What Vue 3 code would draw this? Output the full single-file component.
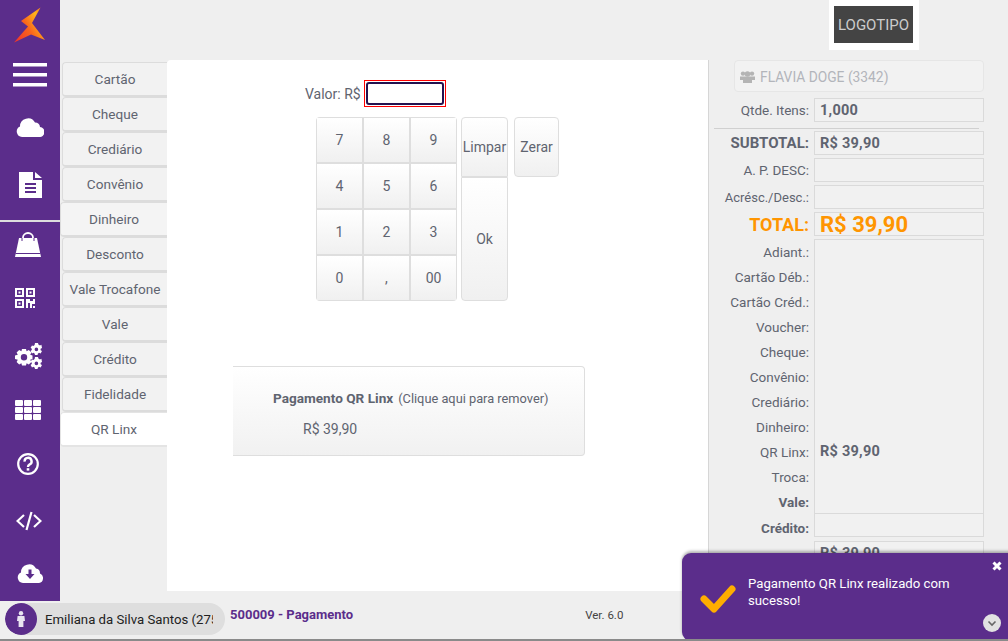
<script setup>
const tabs = ['Cartão', 'Cheque', 'Crediário', 'Convênio', 'Dinheiro', 'Desconto', 'Vale Trocafone', 'Vale', 'Crédito', 'Fidelidade', 'QR Linx'];
const keys = ['7', '8', '9', '4', '5', '6', '1', '2', '3', '0', ',', '00'];
const payments = [
  { label: 'Adiant.:' },
  { label: 'Cartão Déb.:' },
  { label: 'Cartão Créd.:' },
  { label: 'Voucher:' },
  { label: 'Cheque:' },
  { label: 'Convênio:' },
  { label: 'Crediário:' },
  { label: 'Dinheiro:' },
  { label: 'QR Linx:', value: 'R$ 39,90' },
  { label: 'Troca:' },
  { label: 'Vale:', bold: true }
];
</script>

<template>
  <div class="app">
    <aside class="side">
      <nav class="rail">
        <a class="ico">
          <svg width="32" height="36" viewBox="0 0 32 36">
            <defs>
              <linearGradient id="lg" x1="0" y1="1" x2="1" y2="0.3">
                <stop offset="0" stop-color="#f0302c" />
                <stop offset="0.5" stop-color="#f9641c" />
                <stop offset="0.85" stop-color="#ffb41a" />
                <stop offset="1" stop-color="#ff8a1a" />
              </linearGradient>
            </defs>
            <path d="M26.5 0.5 L7 14 L14 19.5 L0 35.5 L17 27.5 L31 33 L18 16 Z" fill="url(#lg)" />
          </svg>
        </a>
        <a class="ico">
          <svg width="34" height="24" viewBox="0 0 34 24" fill="#fff">
            <rect y="0" width="34" height="3.5" />
            <rect y="10" width="34" height="3.5" />
            <rect y="20" width="34" height="3.5" />
          </svg>
        </a>
        <a class="ico">
          <svg width="28" height="20" viewBox="0 0 28 20" fill="#fff">
            <path d="M6 20 A5.5 5.5 0 0 1 4 9.5 A8 8 0 0 1 19 5.5 A5 5 0 0 1 24 10 A5 5 0 0 1 23 20 Z" />
          </svg>
        </a>
        <a class="ico">
          <svg width="23" height="26" viewBox="0 0 23 26">
            <path d="M0 0 H14 V8 H23 V26 H0 Z M16 0 L23 6 H16 Z" fill="#fff" />
            <path d="M6 12 H17 M6 16 H17 M6 20 H17" stroke="#5b2d8b" stroke-width="2" />
          </svg>
        </a>
        <div class="rule"></div>
        <a class="ico nudge">
          <svg width="26" height="26" viewBox="0 0 26 26" fill="none">
            <path d="M4 6 H22 L26 25 H0 Z" fill="#fff" />
            <path d="M8 9 V5.5 A5 4.5 0 0 1 18 5.5 V9" stroke="#fff" stroke-width="1.8" />
            <path d="M7 6 V9 M19 6 V9" stroke="#5b2d8b" stroke-width="1" />
            <path d="M0.5 21.5 H25.5" stroke="#5b2d8b" stroke-width="1" />
          </svg>
        </a>
        <a class="ico ico-qr">
          <svg width="20" height="20" viewBox="0 0 20 20" fill="#fff">
            <path fill-rule="evenodd" d="M0 0 H9 V9 H0 Z M2 2 V7 H7 V2 Z M3.5 3.5 H5.5 V5.5 H3.5 Z" />
            <path fill-rule="evenodd" d="M11 0 H20 V9 H11 Z M13 2 V7 H18 V2 Z M14.5 3.5 H16.5 V5.5 H14.5 Z" />
            <path fill-rule="evenodd" d="M0 11 H9 V20 H0 Z M2 13 V18 H7 V13 Z M3.5 14.5 H5.5 V16.5 H3.5 Z" />
            <path d="M11 11 H15 V13 H18 V11 H20 V16 H17 V20 H15 V15 H13 V20 H11 Z M18 18 H20 V20 H18 Z" />
          </svg>
        </a>
        <a class="ico nudge">
          <svg width="28" height="26" viewBox="0 0 28 26" fill="#fff">
            <path fill-rule="evenodd" d="M8 6 H12 L12.6 8.2 L14.8 7 L17.4 9.6 L16.2 11.8 L18.5 12.5 V16 L16.2 16.7 L17.4 18.9 L14.8 21.5 L12.6 20.3 L12 22.5 H8 L7.4 20.3 L5.2 21.5 L2.6 18.9 L3.8 16.7 L1 16 V12.5 L3.8 11.8 L2.6 9.6 L5.2 7 L7.4 8.2 Z M10 11 A3.2 3.2 0 1 0 10 17.4 A3.2 3.2 0 1 0 10 11 Z" />
            <path fill-rule="evenodd" d="M21 0 H24 L24.4 1.6 L26 2.4 L27.4 1.8 L28 5 L26.6 5.8 V7.2 L28 8 L26.6 10.4 L25 9.8 L23.8 10.8 L23.6 12 H21 L20.6 10.6 L19.4 9.8 L18 10.4 L16.6 8 L17.8 7 V5.8 L16.6 4.8 L18 2.4 L19.4 3 L20.6 2 Z M22.4 4.6 A1.8 1.8 0 1 0 22.4 8.2 A1.8 1.8 0 1 0 22.4 4.6 Z" />
            <path fill-rule="evenodd" d="M21 14 H24 L24.4 15.6 L26 16.4 L27.4 15.8 L28 19 L26.6 19.8 V21.2 L28 22 L26.6 24.4 L25 23.8 L23.8 24.8 L23.6 26 H21 L20.6 24.6 L19.4 23.8 L18 24.4 L16.6 22 L17.8 21 V19.8 L16.6 18.8 L18 16.4 L19.4 17 L20.6 16 Z M22.4 18.6 A1.8 1.8 0 1 0 22.4 22.2 A1.8 1.8 0 1 0 22.4 18.6 Z" />
          </svg>
        </a>
        <a class="ico nudge">
          <svg width="26" height="20" viewBox="0 0 26 20" fill="#fff">
            <rect x="0" y="0" width="8" height="6" rx="1" />
            <rect x="9" y="0" width="8" height="6" rx="1" />
            <rect x="18" y="0" width="8" height="6" rx="1" />
            <rect x="0" y="7" width="8" height="6" rx="1" />
            <rect x="9" y="7" width="8" height="6" rx="1" />
            <rect x="18" y="7" width="8" height="6" rx="1" />
            <rect x="0" y="14" width="8" height="6" rx="1" />
            <rect x="9" y="14" width="8" height="6" rx="1" />
            <rect x="18" y="14" width="8" height="6" rx="1" />
          </svg>
        </a>
        <a class="ico nudge">
          <svg width="22" height="22" viewBox="0 0 22 22" fill="none" stroke="#fff">
            <circle cx="11" cy="11" r="9.8" stroke-width="2.2" />
            <path d="M7.6 8.6 A3.5 3.5 0 1 1 12.4 11.6 C11.3 12.2 11 12.7 11 14" stroke-width="2.4" />
            <path d="M11 15.2 V17.6" stroke-width="2.6" />
          </svg>
        </a>
        <a class="ico ico-code">
          <svg width="26" height="20" viewBox="0 0 26 20" fill="none" stroke="#fff" stroke-width="2.2">
            <path d="M8 4 L1.5 10 L8 16" />
            <path d="M18 4 L24.5 10 L18 16" />
            <path d="M15.5 1 L10.5 19" />
          </svg>
        </a>
        <a class="ico">
          <svg width="26" height="19" viewBox="0 0 26 19">
            <path d="M6 19 A5.5 5.5 0 0 1 4 8.5 A8 8 0 0 1 19 4.5 A5 5 0 0 1 23 9.5 A5 5 0 0 1 22 19 Z" fill="#fff" />
            <path d="M11.5 5.5 H14.5 V10 H17.5 L13 15 L8.5 10 H11.5 Z" fill="#5b2d8b" />
          </svg>
        </a>
      </nav>
    </aside>

    <div class="main">
      <header class="top">
        <div class="logo-wrap">
          <div class="logo">LOGOTIPO</div>
        </div>
      </header>

      <div class="middle">
        <ul class="tabs">
          <li
            v-for="tab in tabs"
            :key="tab"
            class="tab"
            :class="{ hover: tab === 'Dinheiro', active: tab === 'QR Linx' }"
          >{{ tab }}</li>
        </ul>

        <section class="panel">
          <div class="value-row">
            <label class="value-label">Valor: R$</label>
            <span class="value-input"><input type="text" /></span>
          </div>

          <div class="pad-row">
            <div class="keys">
              <button v-for="k in keys" :key="k" class="key">{{ k }}</button>
            </div>
            <div class="actions">
              <button class="key act-clear">Limpar</button>
              <button class="key act-ok">Ok</button>
            </div>
            <button class="key act-zero">Zerar</button>
          </div>

          <div class="pay-card">
            <p class="pay-title"><strong>Pagamento QR Linx</strong><span>(Clique aqui para remover)</span></p>
            <p class="pay-value">R$ 39,90</p>
          </div>
        </section>

        <section class="summary">
          <button class="customer">
            <svg width="15" height="12" viewBox="0 0 15 12" fill="#b4b4b4">
              <circle cx="3" cy="2.6" r="2.2" />
              <circle cx="12" cy="2.6" r="2.2" />
              <circle cx="7.5" cy="3" r="2.8" />
              <path d="M0 5.5 H15 V9 H12 V12 H3 V9 H0 Z" />
            </svg>
            FLAVIA DOGE (3342)
          </button>

          <div class="line first">
            <span class="lbl">Qtde. Itens:</span>
            <span class="box strong">1,000</span>
          </div>
          <hr />
          <div class="line">
            <span class="lbl big-lbl">SUBTOTAL:</span>
            <span class="box strong">R$ 39,90</span>
          </div>
          <div class="line">
            <span class="lbl">A. P. DESC:</span>
            <span class="box"></span>
          </div>
          <div class="line">
            <span class="lbl small-lbl">Acrésc./Desc.:</span>
            <span class="box"></span>
          </div>
          <div class="line">
            <span class="lbl total">TOTAL:</span>
            <span class="box total-val">R$ 39,90</span>
          </div>

          <div class="pay-list">
            <div v-for="p in payments" :key="p.label" class="pay-line">
              <span class="lbl" :class="{ bold: p.bold }">{{ p.label }}</span>
              <span class="pay-amount">{{ p.value }}</span>
            </div>
          </div>

          <div class="line credit">
            <span class="lbl bold">Crédito:</span>
            <span class="box"></span>
          </div>
          <div class="line">
            <span class="lbl"></span>
            <span class="box strong">R$ 39,90</span>
          </div>
        </section>
      </div>

      <footer class="bar">
        <span class="screen">500009 - Pagamento</span>
        <span class="version">Ver. 6.0</span>
      </footer>
    </div>

    <div class="user">
      <span class="avatar">
        <svg width="10" height="16" viewBox="0 0 10 16" fill="#e9e4f0">
          <circle cx="5" cy="2.2" r="2.2" />
          <path d="M1.6 5 H8.4 L9 10 H7.4 V16 H2.6 V10 H1 Z" />
        </svg>
      </span>
      <span class="user-name">Emiliana da Silva Santos (2757)</span>
    </div>

    <div class="toast">
      <svg class="toast-check" width="36" height="28" viewBox="0 0 36 28" fill="none">
        <path d="M4 14 L14 24 L32 4" stroke="#ffad00" stroke-width="7" stroke-linejoin="round" stroke-linecap="round" />
      </svg>
      <p class="toast-text">Pagamento QR Linx realizado com sucesso!</p>
      <svg class="toast-close" width="10" height="10" viewBox="0 0 10 10">
        <path d="M1.5 1.5 L8.5 8.5 M8.5 1.5 L1.5 8.5" stroke="#fff" stroke-width="3" />
      </svg>
      <span class="toast-more">
        <svg width="10" height="7" viewBox="0 0 10 7" fill="none">
          <path d="M1.5 1.5 L5 5 L8.5 1.5" stroke="#666" stroke-width="1.6" />
        </svg>
      </span>
    </div>
  </div>
</template>

<style>
html, body {
  margin: 0;
  overflow: hidden;
}
</style>

<style scoped>
.app {
  position: relative;
  display: flex;
  width: 1008px;
  height: 641px;
  overflow: hidden;
  background: #efefef;
  font-family: Roboto, "Noto Sans", sans-serif;
  font-size: 14px;
  color: #5f6470;
  box-sizing: border-box;
  border-bottom: 2px solid #8a8a8a;
}

.side {
  width: 60px;
  flex: none;
}

.rail {
  height: 601px;
  background: #5b2d8b;
  display: grid;
  grid-template-rows: 50px 50px 54px 62px 6px 46px 60px 56px 52px 56px 58px 46px 5px;
}

.ico {
  display: flex;
  align-items: center;
  justify-content: center;
}

.ico-qr {
  padding-right: 10px;
}

.nudge {
  padding-right: 4px;
}

.ico-code {
  padding-right: 2px;
}

.rule {
  border-bottom: 2px solid #ddd;
}

.main {
  flex: 1;
  display: flex;
  flex-direction: column;
  min-width: 0;
}

.top {
  height: 60px;
  flex: none;
  display: flex;
  padding-left: 769px;
}

.logo-wrap {
  width: 90px;
  height: 50px;
  background: #fff;
  padding: 6px 6px 7px 5px;
  box-sizing: border-box;
}

.logo {
  height: 37px;
  background: #444;
  color: #ccc;
  display: flex;
  align-items: center;
  justify-content: center;
  font-size: 15px;
}

.middle {
  flex: 1;
  display: flex;
  min-height: 0;
}

.tabs {
  list-style: none;
  margin: 2px 0 0;
  padding: 0;
  width: 107px;
  flex: none;
}

.tab {
  margin: 0 0 0 2px;
  padding-top: 1px;
  height: 31px;
  background: #f2f2f2;
  border: 1px solid #dcdcdc;
  border-bottom-width: 2px;
  border-right: none;
  border-radius: 4px 0 0 4px;
  display: flex;
  align-items: center;
  justify-content: center;
  line-height: 1;
  font-size: 13.6px;
  box-sizing: content-box;
}

.tab.hover {
  margin-left: 0;
  background: #f4f4f4;
}

.tab.active {
  margin-left: 0;
  background: #fff;
  border-color: #e4e4e4;
}

.panel {
  width: 542px;
  flex: none;
  background: #fff;
  border-right: 1px solid #d6d6d6;
  box-sizing: border-box;
  border-radius: 4px 0 0 0;
  padding-top: 20px;
}

.value-row {
  display: flex;
  align-items: center;
  height: 27px;
  padding-left: 138px;
}

.value-label {
  width: 55px;
  white-space: nowrap;
  margin-right: 4px;
}

.value-input {
  display: block;
  width: 82px;
  height: 27px;
  box-sizing: border-box;
  border: 1px solid #f00;
  padding: 1px;
}

.value-input input {
  display: block;
  width: 100%;
  height: 100%;
  box-sizing: border-box;
  border: 2px solid #24124f;
  border-radius: 3px;
  outline: none;
  padding: 0;
  background: #fff;
}

.pad-row {
  display: flex;
  align-items: flex-start;
  margin: 10px 0 0 149px;
}

.keys {
  display: grid;
  grid-template-columns: repeat(3, 47px);
  grid-auto-rows: 46px;
  width: 141px;
  border-radius: 4px;
  overflow: hidden;
}

.key {
  font-family: inherit;
  font-size: 14px;
  color: #5f6470;
  padding: 0;
  background: linear-gradient(#fff, #f0f0f0);
  border: 1px solid #dedede;
  box-sizing: border-box;
}

.actions {
  display: flex;
  flex-direction: column;
  width: 47px;
  margin-left: 4px;
}

.act-clear {
  height: 60px;
  border-radius: 4px 4px 0 0;
}

.act-ok {
  height: 124px;
  border-radius: 0 0 4px 4px;
}

.act-zero {
  width: 45px;
  height: 60px;
  margin-left: 6px;
  border-radius: 4px;
}

.pay-card {
  width: 352px;
  height: 90px;
  margin: 65px 0 0 66px;
  box-sizing: border-box;
  padding-top: 23px;
  background: linear-gradient(#fff, #f1f1f1);
  border: 1px solid #dedede;
  border-left: none;
  border-radius: 0 4px 4px 0;
  font-size: 12.8px;
}

.pay-title {
  margin: 0 0 0 40px;
  line-height: 16px;
}

.pay-title strong {
  margin-right: 5px;
  font-weight: 700;
  font-size: 13.6px;
}

.pay-value {
  margin: 14px 0 0 70px;
  line-height: 16px;
  font-size: 14px;
}

.summary {
  flex: 1;
  padding-left: 5px;
  min-width: 0;
}

.customer {
  display: flex;
  align-items: center;
  gap: 5px;
  width: 250px;
  height: 32px;
  margin-left: 20px;
  padding: 2px 0 0 5px;
  font-family: inherit;
  font-size: 13.8px;
  color: #b2b5bb;
  background: #f2f2f2;
  border: 1px solid #e6e6e6;
  border-radius: 4px;
}

.line {
  display: flex;
  align-items: center;
  margin-bottom: 3px;
}

.line.first {
  margin-top: 6px;
  margin-bottom: 0;
}

.line.credit {
  margin-top: -1px;
  margin-bottom: 4px;
}

.line.credit .lbl {
  padding-top: 5px;
}

.lbl {
  width: 95px;
  flex: none;
  text-align: right;
  white-space: nowrap;
  margin-right: 5px;
  font-size: 13.5px;
}

.small-lbl {
  font-size: 13px;
}

.box {
  display: flex;
  align-items: center;
  width: 170px;
  height: 24px;
  box-sizing: border-box;
  padding-left: 5px;
  background: #f1f1f1;
  border: 1px solid #dadada;
}

.strong {
  font-weight: 700;
  font-size: 14.5px;
  letter-spacing: 0.25px;
}

hr {
  width: 265px;
  margin: 6px 0 2px;
  border: none;
  border-top: 1px solid #d0d0d0;
  height: 0;
}

.big-lbl {
  font-weight: 700;
  font-size: 15px;
}

.total {
  color: #ff9500;
  font-weight: 700;
  font-size: 18px;
}

.total-val {
  color: #ff9500;
  font-weight: 700;
  font-size: 22px;
}

.bold {
  font-weight: 700;
}

.pay-list {
  width: 270px;
  height: 275px;
  box-sizing: border-box;
  background: linear-gradient(to right, transparent 100px, #f1f1f1 100px);
  position: relative;
}

.pay-line {
  display: flex;
  align-items: center;
  height: 25px;
}

.pay-list::after {
  content: "";
  position: absolute;
  left: 100px;
  top: 0;
  width: 170px;
  height: 275px;
  box-sizing: border-box;
  border: 1px solid #dadada;
}

.pay-amount {
  padding-left: 6px;
  font-weight: 700;
  font-size: 14.5px;
  letter-spacing: 0.25px;
}

.bar {
  height: 48px;
  flex: none;
  position: relative;
  display: flex;
  align-items: flex-start;
  padding: 15px 0 0 170px;
  box-sizing: border-box;
}

.screen {
  color: #5b2d8b;
  font-weight: 700;
  font-size: 13px;
  line-height: 18px;
}

.version {
  margin-left: 232px;
  font-size: 11.5px;
  line-height: 18px;
  color: #444;
}

.user {
  position: absolute;
  left: 5px;
  top: 603px;
  width: 220px;
  height: 32px;
  display: flex;
  align-items: center;
  background: #dedede;
  border-radius: 16px;
  overflow: hidden;
}

.avatar {
  width: 32px;
  height: 32px;
  flex: none;
  border-radius: 50%;
  background: #5b2d8b;
  display: flex;
  align-items: center;
  justify-content: center;
}

.user-name {
  margin-left: 8px;
  width: 168px;
  overflow: hidden;
  white-space: nowrap;
  color: #222;
  font-size: 13.2px;
}

.toast {
  position: absolute;
  left: 682px;
  top: 553px;
  width: 340px;
  height: 88px;
  background: #5b2d8b;
  border-radius: 9px;
  box-shadow: 0 -2px 3px rgba(0, 0, 0, 0.3);
}

.toast-check {
  position: absolute;
  left: 18px;
  top: 32px;
}

.toast-text {
  position: absolute;
  left: 66px;
  top: 22px;
  width: 230px;
  margin: 0;
  color: #fff;
  font-size: 13.2px;
  line-height: 17px;
}

.toast-close {
  position: absolute;
  left: 310px;
  top: 8px;
}

.toast-more {
  position: absolute;
  left: 301px;
  top: 61px;
  width: 18px;
  height: 18px;
  border-radius: 50%;
  background: #e2e2e2;
  display: flex;
  align-items: center;
  justify-content: center;
}
</style>
